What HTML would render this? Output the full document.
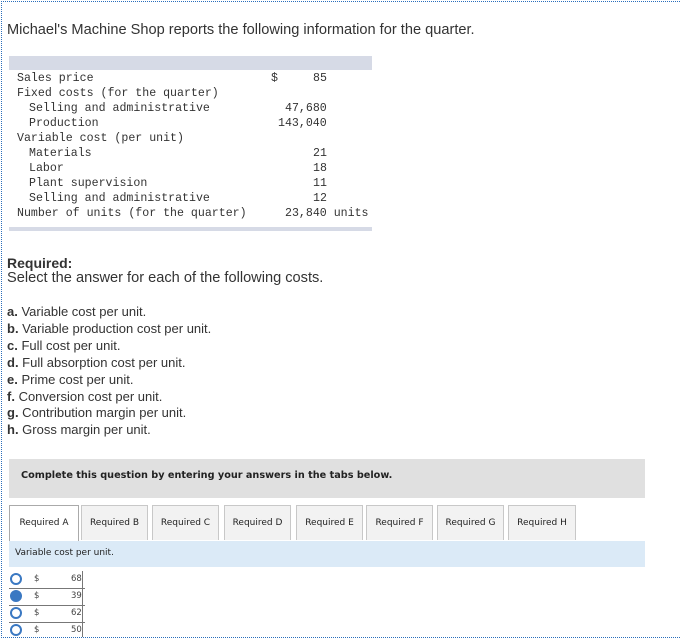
<!DOCTYPE html>
<html><head><style>
body{margin:0;width:683px;height:642px;background:#fff;position:relative;font-family:"Liberation Sans",sans-serif;color:#333;overflow:hidden}
.a{position:absolute;white-space:nowrap}
.frame{position:absolute;left:1px;top:1px;width:678px;height:635px;border:1px dotted #2a6ebb;border-right:none}
.mono{font-family:"Liberation Mono",monospace;font-size:11.6px;color:#333}
.t{font-size:13px}
.tab{position:absolute;top:505px;height:35px;border:1px solid #c8c8c8;border-bottom:none;background:#f2f2f2;font-family:"DejaVu Sans",sans-serif;font-size:9px;line-height:35px;text-align:center;color:#222;box-sizing:border-box}
.rad{position:absolute;left:10px;width:12px;height:12px;border:2px solid #3a78c2;border-radius:50%;box-sizing:border-box}
.row{position:absolute;left:9px;width:76px;height:17px;border-bottom:1px solid #777;font-family:"DejaVu Sans",sans-serif;font-size:8.5px;color:#444}
</style></head><body>
<div class="frame"></div>
<div class="a" style="left:7px;top:22px;font-size:14.6px">Michael's Machine Shop reports the following information for the quarter.</div>
<div class="a" style="left:9px;top:56px;width:363px;height:14px;background:#d6dae6"></div>
<div class="a" style="left:9px;top:227px;width:363px;height:4px;background:#d6dae6"></div>
<div class="mono">
<div class="a" style="left:17px;top:72px">Sales price</div>
<div class="a" style="left:17px;top:87px">Fixed costs (for the quarter)</div>
<div class="a" style="left:29px;top:102px">Selling and administrative</div>
<div class="a" style="left:29px;top:117px">Production</div>
<div class="a" style="left:17px;top:132px">Variable cost (per unit)</div>
<div class="a" style="left:29px;top:147px">Materials</div>
<div class="a" style="left:29px;top:162px">Labor</div>
<div class="a" style="left:29px;top:177px">Plant supervision</div>
<div class="a" style="left:29px;top:192px">Selling and administrative</div>
<div class="a" style="left:17px;top:207px">Number of units (for the quarter)</div>
<div class="a" style="left:271px;top:72px">$</div>
<div class="a" style="left:313px;top:72px">85</div>
<div class="a" style="left:285px;top:102px">47,680</div>
<div class="a" style="left:278px;top:117px">143,040</div>
<div class="a" style="left:313px;top:147px">21</div>
<div class="a" style="left:313px;top:162px">18</div>
<div class="a" style="left:313px;top:177px">11</div>
<div class="a" style="left:313px;top:192px">12</div>
<div class="a" style="left:285px;top:207px">23,840 units</div>
</div>
<div class="a" style="left:7px;top:255px;font-size:14px;font-weight:bold">Required:</div>
<div class="a" style="left:7px;top:270px;font-size:14.6px">Select the answer for each of the following costs.</div>
<div class="a t" style="left:7px;top:304px;line-height:16.9px"><b>a.</b> Variable cost per unit.<br><b>b.</b> Variable production cost per unit.<br><b>c.</b> Full cost per unit.<br><b>d.</b> Full absorption cost per unit.<br><b>e.</b> Prime cost per unit.<br><b>f.</b> Conversion cost per unit.<br><b>g.</b> Contribution margin per unit.<br><b>h.</b> Gross margin per unit.</div>
<div class="a" style="left:9px;top:459px;width:636px;height:39px;background:#e0e0e0"></div>
<div class="a" style="left:21px;top:470px;font-family:'DejaVu Sans',sans-serif;font-size:9.7px;font-weight:bold;color:#222">Complete this question by entering your answers in the tabs below.</div>
<div class="tab" style="left:9px;width:70px;background:#fff;height:36px;border-color:#aaa">Required A</div>
<div class="tab" style="left:81px;width:67px">Required B</div>
<div class="tab" style="left:152px;width:67px">Required C</div>
<div class="tab" style="left:224px;width:67px">Required D</div>
<div class="tab" style="left:296px;width:67px">Required E</div>
<div class="tab" style="left:366px;width:67px">Required F</div>
<div class="tab" style="left:437px;width:67px">Required G</div>
<div class="tab" style="left:508px;width:68px">Required H</div>
<div class="a" style="left:9px;top:541px;width:636px;height:26px;background:#dbeaf7"></div>
<div class="a" style="left:15px;top:548px;font-family:'DejaVu Sans',sans-serif;font-size:9px;color:#222">Variable cost per unit.</div>
<div class="a" style="left:82px;top:571px;width:1px;height:66px;background:#777"></div>
<div class="row" style="top:571px"><span class="a" style="left:25px;top:3px">$</span><span class="a" style="left:62px;top:3px">68</span></div>
<div class="row" style="top:588px"><span class="a" style="left:25px;top:3px">$</span><span class="a" style="left:62px;top:3px">39</span></div>
<div class="row" style="top:605px"><span class="a" style="left:25px;top:3px">$</span><span class="a" style="left:62px;top:3px">62</span></div>
<div class="row" style="top:622px;border-bottom:none"><span class="a" style="left:25px;top:3px">$</span><span class="a" style="left:62px;top:3px">50</span></div>
<div class="rad" style="top:573px"></div>
<div class="rad" style="top:590px;background:#3a78c2"></div>
<div class="rad" style="top:607px"></div>
<div class="rad" style="top:624px"></div>
</body></html>
